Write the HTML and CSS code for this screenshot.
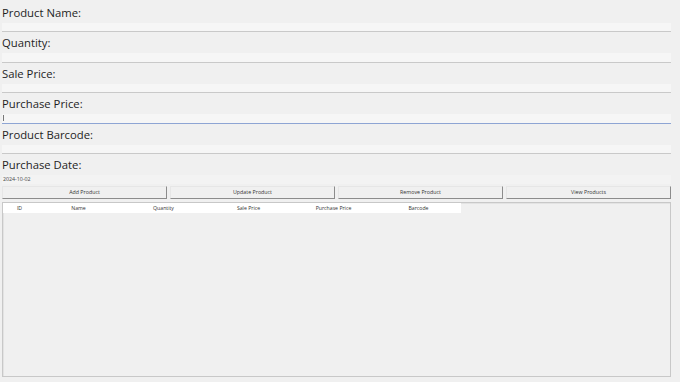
FILE: index.html
```html
<!DOCTYPE html>
<html>
<head>
<meta charset="utf-8">
<link rel="stylesheet" href="styles.css">
</head>
<body>
<div class="app">
  <div class="form">
    <div class="row"><div class="label">Product Name:</div><div class="field"></div></div>
    <div class="row"><div class="label">Quantity:</div><div class="field"></div></div>
    <div class="row"><div class="label">Sale Price:</div><div class="field"></div></div>
    <div class="row"><div class="label">Purchase Price:</div><div class="field focus"><span class="caret"></span></div></div>
    <div class="row"><div class="label">Product Barcode:</div><div class="field"></div></div>
    <div class="row last"><div class="label">Purchase Date:</div><div class="date">2024-10-02</div></div>
  </div>
  <div class="buttons">
    <div class="btn">Add Product</div>
    <div class="btn">Update Product</div>
    <div class="btn">Remove Product</div>
    <div class="btn">View Products</div>
  </div>
  <div class="table">
    <div class="thead">
      <div class="th c-id">ID</div>
      <div class="th">Name</div>
      <div class="th">Quantity</div>
      <div class="th">Sale Price</div>
      <div class="th">Purchase Price</div>
      <div class="th">Barcode</div>
    </div>
  </div>
</div>
</body>
</html>
```
FILE: styles.css
```css
html, body {
  margin: 0;
  padding: 0;
  background: #f0f0f0;
}
body {
  font-family: "Open Sans", "Noto Sans", sans-serif;
  color: #222;
  width: 680px;
  height: 382px;
  overflow: hidden;
}
.app {
  padding: 2px 9px 0 2px;
  display: flex;
  flex-direction: column;
  height: 382px;
  box-sizing: border-box;
}
.form {
  display: flex;
  flex-direction: column;
  flex-shrink: 0;
}
.row {
  display: flex;
  flex-direction: column;
  height: 30.4px;
  flex-shrink: 0;
}
.label {
  height: 21px;
  flex-shrink: 0;
  font-size: 11.3px;
  line-height: 21px;
  color: #1e1e1e;
  white-space: nowrap;
}
.field {
  height: 9.4px;
  flex-shrink: 0;
  background: #f6f6f6;
  border-bottom: 1px solid #c9c9c9;
  box-sizing: border-box;
  position: relative;
}
.field.focus {
  border-bottom: 1px solid #8ea5d4;
}
.caret {
  position: absolute;
  left: 1px;
  top: 1px;
  width: 1px;
  height: 6px;
  background: #777;
}
.row.last {
  height: auto;
}
.date {
  height: 9px;
  font-size: 5.3px;
  line-height: 9px;
  padding-left: 1px;
  color: #444;
  background: #f3f3f3;
}
.buttons {
  display: grid;
  grid-template-columns: repeat(4, 1fr);
  column-gap: 3px;
  margin-top: 2px;
  flex-shrink: 0;
}
.btn {
  height: 13px;
  box-sizing: border-box;
  border-top: 1px solid #e6e6e6;
  border-left: 1px solid #e6e6e6;
  border-right: 1px solid #8c8c8c;
  border-bottom: 1px solid #8c8c8c;
  background: #f0f0f0;
  font-size: 5.3px;
  line-height: 11px;
  text-align: center;
  color: #333;
}
.table {
  margin-top: 3px;
  height: 175px;
  flex-shrink: 0;
  box-sizing: border-box;
  border: 1px solid #c8c8c8;
  box-shadow: inset 1px 1px 0 #e3e3e3;
  background: #f0f0f0;
}
.thead {
  display: flex;
  width: 458px;
  height: 10px;
  background: #ffffff;
}
.th {
  width: 85px;
  font-size: 5.2px;
  line-height: 10px;
  text-align: center;
  color: #333;
}
.th.c-id {
  width: 33px;
}
```
